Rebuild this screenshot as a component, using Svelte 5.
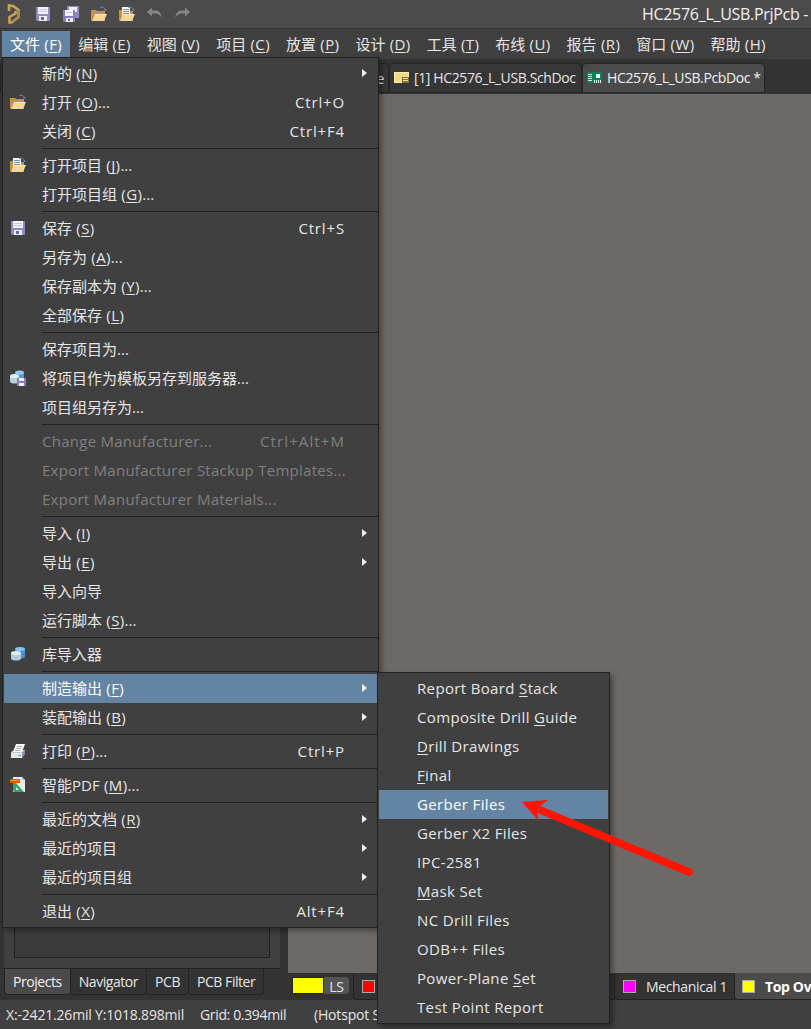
<script>
	const menuBar = [
		['文件', 'F'], ['编辑', 'E'], ['视图', 'V'], ['项目', 'C'], ['放置', 'P'], ['设计', 'D'],
		['工具', 'T'], ['布线', 'U'], ['报告', 'R'], ['窗口', 'W'], ['帮助', 'H']
	];

	// each group is followed by a separator
	const fileMenu = [
		[
			{ text: '新的', key: 'N', sub: true },
			{ text: '打开', key: 'O', dots: true, icon: 'folder', shortcut: 'Ctrl+O' },
			{ text: '关闭', key: 'C', shortcut: 'Ctrl+F4' }
		],
		[
			{ text: '打开项目', key: 'J', dots: true, icon: 'project' },
			{ text: '打开项目组', key: 'G', dots: true }
		],
		[
			{ text: '保存', key: 'S', icon: 'save', shortcut: 'Ctrl+S' },
			{ text: '另存为', key: 'A', dots: true },
			{ text: '保存副本为', key: 'Y', dots: true },
			{ text: '全部保存', key: 'L' }
		],
		[
			{ text: '保存项目为', dots: true },
			{ text: '将项目作为模板另存到服务器', dots: true, icon: 'server' },
			{ text: '项目组另存为', dots: true }
		],
		[
			{ text: 'Change Manufacturer', dots: true, shortcut: 'Ctrl+Alt+M', off: true },
			{ text: 'Export Manufacturer Stackup Templates', dots: true, off: true },
			{ text: 'Export Manufacturer Materials', dots: true, off: true }
		],
		[
			{ text: '导入', key: 'I', sub: true },
			{ text: '导出', key: 'E', sub: true },
			{ text: '导入向导' },
			{ text: '运行脚本', key: 'S', dots: true }
		],
		[{ text: '库导入器', icon: 'library' }],
		[
			{ text: '制造输出', key: 'F', sub: true, active: true },
			{ text: '装配输出', key: 'B', sub: true }
		],
		[{ text: '打印', key: 'P', dots: true, icon: 'print', shortcut: 'Ctrl+P' }],
		[{ text: '智能PDF', key: 'M', dots: true, icon: 'pdf' }],
		[
			{ text: '最近的文档', key: 'R', sub: true },
			{ text: '最近的项目', sub: true },
			{ text: '最近的项目组', sub: true }
		],
		[{ text: '退出', key: 'X', shortcut: 'Alt+F4' }]
	];

	// [before, hot key, after]
	const subMenu = [
		['Report Board ', 'S', 'tack'],
		['Composite Drill ', 'G', 'uide'],
		['', 'D', 'rill Drawings'],
		['', 'F', 'inal'],
		['Gerber Files', '', ''],
		['Gerber X2 Files', '', ''],
		['IPC-2581', '', ''],
		['', 'M', 'ask Set'],
		['NC Drill Files', '', ''],
		['ODB++ Files', '', ''],
		['Power-Plane ', 'S', 'et'],
		['Test Point Report', '', '']
	];

	let selected = 'Gerber Files';
</script>

{#snippet icon(name)}
	<svg class="icon" width="16" height="16" viewBox="0 0 16 16">
		{#if name === 'save'}
			<path d="M1 1h14v14H2l-1-1z" fill="#8f8ac2" />
			<path d="M3 1h10v7H3z" fill="#f3f3fc" />
			<path d="M4 3.500h8M4 5.500h8" stroke="#c5c8dc" />
			<path d="M4 10h8v5H4z" fill="#eef0f8" />
			<path d="M6 11h3v3H6z" fill="#68659a" />
		{:else if name === 'saveall'}
			<path d="M4 0h12v12H4z" fill="#8f8ac2" />
			<path d="M6 1h8v5H6z" fill="#eeeefa" />
			<path d="M0 4h12v12H1l-1-1z" fill="#8580bd" />
			<path d="M2 4h8v6H2z" fill="#f3f3fc" />
			<path d="M3 6.500h6" stroke="#c5c8dc" />
			<path d="M3 12h7v4H3z" fill="#eef0f8" />
			<path d="M5 13h2v2H5z" fill="#68659a" />
		{:else if name === 'folder' || name === 'project'}
			<path d="M0 4h5l1 1h8v10H1L0 14z" fill="#c3934a" />
			{#if name === 'project'}
				<path d="M3 1h8v10H3z" fill="#f8fafc" />
				<path d="M4 3.500h6M4 5.500h6M4 7.500h6" stroke="#6f91ad" />
			{/if}
			<path d="M4 8h12l-3 7H1z" fill="#f5d59a" />
			<path d="M4 8.500h11" stroke="#ffe9bd" />
			<path d="M9 1.500c3-1 4.500 0 5.500 2" fill="none" stroke="#668eac" />
			<path d="M12.500 3.500h3.500L14.500 5z" fill="#668eac" />
		{:else if name === 'server'}
			<path d="M5 3v7c2 2 8 2 9 0V3z" fill="#4e9bd0" />
			<ellipse cx="9.500" cy="2.500" rx="4.500" ry="2" fill="#8ccaf0" />
			<path d="M0 6v6c2 2 7 2 9 0V6z" fill="#b9d0dd" />
			<ellipse cx="4.500" cy="6" rx="4.500" ry="2" fill="#e0edf4" />
			<path d="M7 8h9v8H7z" fill="#8580bd" />
			<path d="M9 8h5v3H9zM9 13h5v3H9z" fill="#f1f1fb" />
		{:else if name === 'library'}
			<path d="M5 3v8c2 2 8 2 10 0V3z" fill="#4991cb" />
			<ellipse cx="10" cy="3" rx="5" ry="2" fill="#83c4ef" />
			<path d="M1 7v6c2 2 8 2 10 0V7z" fill="#b3cbdc" />
			<ellipse cx="6" cy="7" rx="5" ry="2" fill="#e0edf5" />
		{:else if name === 'print'}
			<path d="M1 9l3-2h11v4l-3 4H1z" fill="#c1c8d2" />
			<path d="M12 10l3-3v4l-3 4z" fill="#8290a3" />
			<path d="M6 1h9l-3 8H3z" fill="#fbfcfd" />
			<path d="M7 3.500h5M6 5.500h5M5 7.500h5" stroke="#a3abb3" />
			<path d="M1 10h11v5H1z" fill="#e5e8ed" />
			<path d="M8 12.500h3" stroke="#8995a0" />
		{:else if name === 'pdf'}
			<path d="M3 0h9l3 3v12H3z" fill="#e8edf0" />
			<path d="M12 0v3h3z" fill="#abb9c4" />
			<path d="M0 2h10v4H0z" fill="#e9520c" />
			<path d="M1 3.500h8" stroke="#ff9a1e" />
			<path fill-rule="evenodd" d="M3 6h3l8 9H4l-1-2zm3 4v3h3z" fill="#36a66e" />
		{/if}
	</svg>
{/snippet}

<div class="window">
	<div class="title">
		<svg class="logo" width="16" height="21" viewBox="0 0 16 21">
			<path d="M3 7V1.500L7 2l5.500 4v7L5.500 18.500H3.500V13l6-3.500V7" fill="none" stroke="#c6a45c" stroke-width="2.600" />
			<path d="M12.500 7v6L6 18" fill="none" stroke="#a3824a" stroke-width="1.500" />
		</svg>
		{@render icon('save')}
		{@render icon('saveall')}
		{@render icon('folder')}
		{@render icon('project')}
		<svg class="icon" width="16" height="16" viewBox="0 0 16 16">
			<path d="M0 6l5-4.500v3h4c3 0 5.500 3 5.500 7C12.500 8.500 11 7.500 8 7.500H5v3z" fill="#858585" />
		</svg>
		<svg class="icon" width="16" height="16" viewBox="0 0 16 16">
			<path d="M15 6l-5-4.500v3H6c-3 0-5.500 3-5.500 7 2-3 3.500-4 6.500-4h3v3z" fill="#858585" />
		</svg>
		<span class="caption">HC2576_L_USB.PrjPcb -</span>
	</div>

	<div class="menubar">
		{#each menuBar as [text, key], i}
			<span class="item" class:open={i === 0}>{text}<span class="hot">{' '}(<u>{key}</u>)</span></span>
		{/each}
	</div>

	<div class="docs">
		<div class="doc first">e</div>
		<div class="doc sch">
			<svg width="15" height="12" viewBox="0 0 15 12">
				<path d="M0 0h15v11H0z" fill="#f3da86" />
				<path d="M.5 .5h14v10H.5z" fill="none" stroke="#fbeeb8" />
				<path d="M8 5h7v6H8z" fill="#84703d" />
				<path d="M9 6.500h5M9 8.500h5" stroke="#f5df91" />
			</svg>
			<span>[1] HC2576_L_USB.SchDoc</span>
		</div>
		<div class="doc current">
			<svg width="15" height="12" viewBox="0 0 15 12">
				<path d="M0 0h15v11H0z" fill="#078254" />
				<path d="M1 2.500h4M1 4.500h4M1 6.500h4M1 8.500h4" stroke="#c2f0dc" />
				<path d="M9 2h4v4H9z" fill="#f5fff9" />
				<path d="M7.500 8v3M9.500 8v3M11.500 8v3M13.500 8v3" stroke="#d9f5e7" />
			</svg>
			<span>HC2576_L_USB.PcbDoc *</span>
		</div>
	</div>

	<div class="work">
		<div class="side">
			<div class="panel"><div class="tree"></div></div>
			<div class="sidetabs">
				<span class="current">Projects</span>
				<span>Navigator</span>
				<span>PCB</span>
				<span>PCB Filter</span>
			</div>
		</div>
		<div class="editor">
			<div class="canvas"></div>
			<div class="layers">
				<div class="set"><i></i><span>LS</span></div>
				<div class="layer top"><i class="red"></i></div>
				<div class="layer mech"><i class="pink"></i>Mechanical 1</div>
				<div class="layer overlay"><i class="yellow"></i>Top Overlay</div>
			</div>
		</div>
	</div>

	<div class="status">
		<span class="pos">X:-2421.26mil Y:1018.898mil</span>
		<span class="grid">Grid: 0.394mil</span>
		<span>(Hotspot Snap)</span>
	</div>

	<div class="menu filemenu">
		{#each fileMenu as group, g}
			{#if g > 0}<div class="sep"></div>{/if}
			{#each group as row}
				<div class="row" class:active={row.active} class:off={row.off}>
					<span class="gutter">{#if row.icon}{@render icon(row.icon)}{/if}</span>
					<span class="label">{row.text}{#if row.key}<span class="hot">{' '}(<u>{row.key}</u>)</span>{/if}{row.dots ? '...' : ''}</span>
					{#if row.shortcut}<span class="shortcut">{row.shortcut}</span>{/if}
					{#if row.sub}<i class="arrow"></i>{/if}
				</div>
			{/each}
		{/each}
	</div>

	<div class="menu submenu">
		{#each subMenu as [before, key, after]}
			<div class="row" class:active={before === selected}><span class="label">{before}<u>{key}</u>{after}</span></div>
		{/each}
	</div>

	<svg class="pointer" width="180" height="90" viewBox="0 0 180 90">
		<path d="M19 9.500L169 72" stroke="#ff1500" stroke-width="7.500" />
		<circle cx="169" cy="72" r="3.750" fill="#ff1500" />
		<path d="M2 2L28 0L20 6L17 13L19 21z" fill="#ff1500" />
	</svg>
</div>

<style>
	:global(body) {
		margin: 0;
		background: #333;
	}

	.window {
		position: relative;
		display: flex;
		flex-direction: column;
		width: 811px;
		height: 1029px;
		overflow: hidden;
		background: #333;
		color: #e6e6e6;
		font: 15px 'Open Sans', 'Noto Sans CJK SC', sans-serif;
		white-space: nowrap;
	}
	.window :global(*) {
		box-sizing: border-box;
	}
	svg {
		display: block;
		flex: none;
	}
	u {
		text-underline-offset: 2px;
		text-decoration-thickness: 1px;
		text-decoration-skip-ink: none;
	}
	.hot {
		letter-spacing: 0.4px;
	}

	.title {
		display: flex;
		align-items: center;
		gap: 12px;
		height: 29px;
		padding-left: 6px;
		background: #4b4b4b;
		border-bottom: 1px solid #363636;
	}
	.logo {
		margin-right: 1px;
	}
	.caption {
		margin-left: 439px;
		font-size: 16px;
		letter-spacing: -0.3px;
		color: #f2f2f2;
	}

	.menubar {
		display: flex;
		height: 30px;
		padding: 2px 0 0 2px;
		background: #404040;
	}
	.item {
		height: 27px;
		padding: 0 8px;
		line-height: 26px;
	}
	.item.open {
		background: #6384a3;
		color: #fff;
	}

	.docs {
		display: flex;
		align-items: flex-end;
		height: 35px;
		padding-bottom: 1px;
		font-size: 14px;
		letter-spacing: -0.38px;
	}
	.doc {
		display: flex;
		align-items: center;
		gap: 5px;
		height: 30px;
		padding: 0 4px;
		border: 1px solid #252525;
		border-radius: 4px 4px 0 0;
		background: #363636;
	}
	.doc span {
		padding-bottom: 1px;
	}
	.first {
		justify-content: flex-end;
		width: 389px;
	}
	.sch {
		width: 193px;
	}
	.doc.current {
		width: 183px;
		background: #4b4b4b;
		color: #f2f2f2;
	}

	.work {
		display: flex;
		height: 906px;
	}
	.side {
		width: 288px;
		padding: 0 8px 0 4px;
	}
	.panel {
		height: 874px;
		padding: 0 10px 10px;
		background: #404040;
	}
	.tree {
		height: 864px;
		border: 1px solid #222;
		background: #3b3b3b;
	}
	.sidetabs {
		display: flex;
		height: 27px;
		border-top: 1px solid #222;
		font-size: 14px;
		letter-spacing: -0.45px;
	}
	.sidetabs span {
		height: 26px;
		padding: 0 8px;
		border: 1px solid #222;
		border-width: 0 1px 1px 0;
		border-radius: 0 0 4px 4px;
		line-height: 26px;
	}
	.sidetabs .current {
		border-left-width: 1px;
		background: #4b4b4b;
		color: #f2f2f2;
	}

	.editor {
		flex: 1;
		min-width: 0;
	}
	.canvas {
		height: 879px;
		background: #6d6967;
	}
	.layers {
		display: flex;
		height: 27px;
		font-size: 14px;
		letter-spacing: -0.35px;
	}
	.set {
		display: flex;
		flex: none;
		width: 65px;
		padding: 4px 4px 6px;
	}
	.set i {
		width: 32px;
		height: 17px;
		border: 1px solid #222;
		background: #ff0;
	}
	.set span {
		width: 25px;
		height: 17px;
		border-radius: 0 4px 4px 0;
		background: #555;
		line-height: 19px;
		text-align: center;
	}
	.layer {
		display: flex;
		flex: none;
		align-items: center;
		height: 27px;
		padding-left: 8px;
		border: 1px solid #222;
		border-width: 0 0 1px 1px;
		border-radius: 0 0 0 4px;
	}
	.layer i {
		width: 13px;
		height: 13px;
		margin-right: 10px;
		border: 1px solid #aaa;
	}
	.top {
		width: 261px;
	}
	.mech {
		width: 120px;
	}
	.overlay {
		width: 120px;
		padding-left: 7px;
		background: #4b4b4b;
		color: #fff;
		font-weight: bold;
	}
	.red {
		background: #f00;
	}
	.pink {
		background: #f0f;
	}
	.yellow {
		background: #ff0;
	}

	.status {
		display: flex;
		height: 29px;
		padding-left: 6px;
		background: #404040;
		font-size: 14px;
		line-height: 30px;
		letter-spacing: -0.18px;
	}
	.pos {
		width: 194px;
	}
	.grid {
		width: 114px;
		letter-spacing: -0.35px;
	}

	/* drop-down menus lie over the workspace */
	.menu {
		position: absolute;
		padding: 1px 1px 0;
		border: 1px solid #222;
		background: #404040;
		box-shadow: 3px 3px 5px rgba(0, 0, 0, 0.35);
	}
	.filemenu {
		left: 2px;
		top: 57px;
		width: 377px;
		height: 871px;
	}
	.submenu {
		left: 377px;
		top: 672px;
		width: 233px;
		height: 352px;
	}
	.row {
		display: flex;
		align-items: center;
		height: 29px;
		line-height: 28px;
		padding-bottom: 1px;
	}
	.active {
		background: #6384a3;
		color: #fff;
	}
	.off {
		color: #808080;
	}
	.off .label {
		letter-spacing: 0.26px;
	}
	.gutter {
		width: 38px;
		padding-left: 6px;
	}
	.submenu .label {
		padding-left: 38px;
		letter-spacing: 0.35px;
	}
	.shortcut {
		margin: 0 32px 0 auto;
		letter-spacing: 0.85px;
	}
	.off .shortcut {
		letter-spacing: 1.1px;
	}
	.arrow {
		margin: 0 10px 0 auto;
		border: 4px solid transparent;
		border-left: 5px solid #f0f0f0;
		border-right: 0;
	}
	.sep {
		height: 5px;
		margin: 0 -1px 0 38px;
		border-top: 2px solid #404040;
		background: linear-gradient(#222 1px, transparent 1px);
	}
	.pointer {
		position: absolute;
		left: 520px;
		top: 800px;
	}
</style>
